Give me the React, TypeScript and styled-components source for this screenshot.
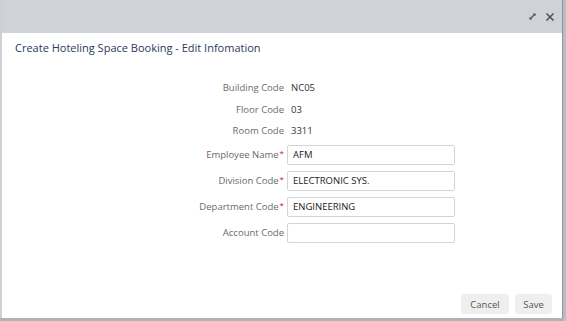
import React from 'react'
import styled, { createGlobalStyle } from 'styled-components'

const GlobalStyle = createGlobalStyle`
  html, body {
    margin: 0;
    padding: 0;
    height: 100%;
    background: #b9bdc2;
    font-family: "Open Sans", "Noto Sans", Arial, sans-serif;
  }
  #root {
    height: 100%;
  }
`

const Dialog = styled.div`
  box-sizing: border-box;
  width: 563px;
  height: 318px;
  display: flex;
  flex-direction: column;
  background: #fff;
  border-left: 2px solid #cdd1d6;
  border-right: 1px solid #8e949a;
`

const Header = styled.div`
  height: 33px;
  flex: none;
  background: #cfd3d8;
  display: flex;
  justify-content: flex-end;
  align-items: center;
  gap: 6px;
  padding: 0 7px 0 0;
`

const IconButton = styled.button`
  border: 0;
  padding: 0;
  background: none;
  width: 11px;
  height: 11px;
  display: flex;
  align-items: center;
  justify-content: center;
  color: #4a4f57;
`

const Title = styled.div`
  margin: 7px 0 0 13px;
  line-height: 16px;
  font-size: 11px;
  color: #283a57;
`

const Form = styled.div`
  margin-top: 21px;
  display: flex;
  flex-direction: column;
`

const Row = styled.div<{ $h: number }>`
  display: grid;
  grid-template-columns: 282px 168px;
  column-gap: 3px;
  align-items: center;
  height: ${(p) => p.$h}px;
`

const Label = styled.div`
  text-align: right;
  font-size: 9.5px;
  color: #6a6a6a;
`

const Req = styled.span`
  color: #c0161c;
  font-size: 8px;
  vertical-align: top;
  line-height: 10px;
  margin-left: 1px;
`

const Value = styled.div`
  padding-left: 4px;
  font-size: 9.5px;
  color: #333;
`

const Input = styled.input`
  box-sizing: border-box;
  height: 20px;
  width: 168px;
  border: 1px solid #d2d5d8;
  border-radius: 2px;
  padding: 0 5px;
  font-family: inherit;
  font-size: 9.5px;
  color: #222;
  outline: none;
`

const Footer = styled.div`
  margin-top: auto;
  display: flex;
  justify-content: flex-end;
  gap: 6px;
  padding: 0 10px 4px 0;
`

const Button = styled.button<{ $w: number }>`
  height: 20px;
  width: ${(p) => p.$w}px;
  border: 0;
  border-radius: 3px;
  background: #efefef;
  color: #555;
  font-family: inherit;
  font-size: 9.5px;
  padding: 0;
`

const Bottom = styled.div`
  width: 563px;
  height: 3px;
  background: #aeb3b8;
`

const staticRows = [
  { label: 'Building Code', value: 'NC05' },
  { label: 'Floor Code', value: '03' },
  { label: 'Room Code', value: '3311' },
]

const inputRows = [
  { label: 'Employee Name', value: 'AFM', required: true },
  { label: 'Division Code', value: 'ELECTRONIC SYS.', required: true },
  { label: 'Department Code', value: 'ENGINEERING', required: true },
  { label: 'Account Code', value: '', required: false },
]

export default function App() {
  return (
    <>
      <GlobalStyle />
      <Dialog>
        <Header>
          <IconButton aria-label="expand">
            <svg width="9" height="9" viewBox="0 0 10 10" fill="none" stroke="currentColor" strokeWidth="1.4">
              <path d="M2.5 7.5 L7.5 2.5" />
              <path d="M5.2 1.6 L8.4 1.6 L8.4 4.8 Z" fill="currentColor" stroke="none" />
              <path d="M1.6 5.2 L1.6 8.4 L4.8 8.4 Z" fill="currentColor" stroke="none" />
            </svg>
          </IconButton>
          <IconButton aria-label="close">
            <svg width="10" height="10" viewBox="0 0 10 10" stroke="currentColor" strokeWidth="1.5">
              <path d="M1.5 1.5 L8.5 8.5 M8.5 1.5 L1.5 8.5" />
            </svg>
          </IconButton>
        </Header>
        <Title>Create Hoteling Space Booking - Edit Infomation</Title>
        <Form>
          {staticRows.map((r) => (
            <Row $h={21.5} key={r.label}>
              <Label>{r.label}</Label>
              <Value>{r.value}</Value>
            </Row>
          ))}
          {inputRows.map((r) => (
            <Row $h={26} key={r.label}>
              <Label>
                {r.label}
                {r.required && <Req>*</Req>}
              </Label>
              <Input defaultValue={r.value} />
            </Row>
          ))}
        </Form>
        <Footer>
          <Button $w={48}>Cancel</Button>
          <Button $w={37}>Save</Button>
        </Footer>
      </Dialog>
      <Bottom />
    </>
  )
}
